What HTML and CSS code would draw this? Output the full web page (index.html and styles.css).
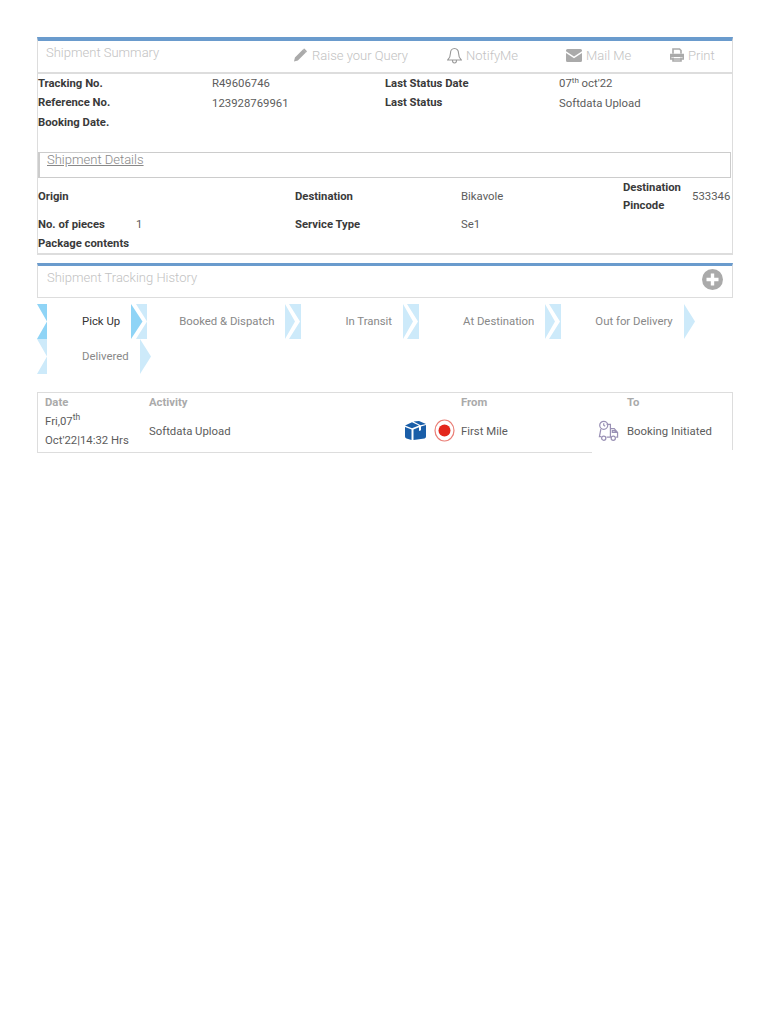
FILE: index.html
```html
<!DOCTYPE html>
<html lang="en">
<head>
<meta charset="utf-8">
<title>Shipment Tracking</title>
<link rel="stylesheet" href="styles.css">
</head>
<body>
<main class="page">
  <section class="panel summary">
    <header class="sum-head">
      <h2 class="sum-title">Shipment Summary</h2>
      <a class="act"><svg class="ico ico-pencil" viewBox="0 0 14 14"><path d="M0 14l1-4.200L9.600 1.200l3.200 3.200L4.200 13zM10.500.4l.6-.4 2.900 2.900-.4.7-.6.6-3.200-3.200z" fill="#aaa"/></svg>Raise your Query</a>
      <a class="act"><svg class="ico ico-bell" viewBox="0 0 15 17"><path d="M7.500 1.500c-2.600 0-4 2-4 4.500 0 3.500-1.300 5.500-2.800 7h13.600c-1.500-1.500-2.800-3.500-2.800-7 0-2.500-1.400-4.500-4-4.500zM5.500 13.500c0 3.300 4 3.300 4 0" fill="none" stroke="#999" stroke-width="1.100"/></svg>NotifyMe</a>
      <a class="act"><svg class="ico ico-mail" viewBox="0 0 16 13"><path d="M1.500 0h13A1.500 1.500 0 0 1 16 1.500v.8L8 7.500 0 2.300v-.8A1.500 1.500 0 0 1 1.500 0zM0 4l8 5.200L16 4v7.500a1.500 1.500 0 0 1-1.500 1.500h-13A1.500 1.500 0 0 1 0 11.500z" fill="#aaa"/></svg>Mail Me</a>
      <a class="act"><svg class="ico ico-print" viewBox="0 0 14 14"><path d="M3 5.500V1h6.500L11 2.500v3M0.800 6.500h12.400v4.500H.8zM3 9.500V13h8V9.500" fill="none" stroke="#aaa" stroke-width="1.600"/><path d="M1 6h12v3H1z" fill="#aaa"/></svg>Print</a>
    </header>
    <div class="sum-grid">
      <b>Tracking No.</b><span>R49606746</span><b>Last Status Date</b><span>07<sup class="th-small">th</sup> oct'22</span>
      <b>Reference No.</b><span>123928769961</span><b>Last Status</b><span>Softdata Upload</span>
      <b>Booking Date.</b><span></span><span></span><span></span>
    </div>
    <div class="det-head"><h3 class="det-title">Shipment Details</h3></div>
    <div class="det-grid">
      <b>Origin</b><span></span><b>Destination</b><span>Bikavole</span><b class="pin">Destination Pincode</b><span class="pin-val">533346</span>
      <b>No. of pieces</b><span>1</span><b>Service Type</b><span>Se1</span><span></span><span></span>
      <b class="wide">Package contents</b>
    </div>
  </section>

  <section class="panel track">
    <header class="track-head">
      <h2 class="sum-title track-title">Shipment Tracking History</h2>
      <svg class="plus" viewBox="0 0 21 21"><circle cx="10.500" cy="10.500" r="10.500" fill="#aaa"/><path d="M8.800 4.500h3.400v4.300h4.300v3.400h-4.300v4.300H8.800v-4.300H4.500V8.800h4.300z" fill="#fff"/></svg>
    </header>
  </section>

  <div class="steps">
    <div class="step s-first active">
      <svg class="notch" viewBox="0 0 10 35"><path d="M0 0h10v35H0l10-17.500z" fill="#8fd4f6"/></svg>
      <span class="lbl">Pick Up</span>
      <svg class="sep" viewBox="0 0 16 35"><path d="M0 0h16v35H0z" fill="#cdeafa"/><path d="M0 0h5l11 17.500L5 35H0z" fill="#fff"/><path d="M0 0l11.500 17.500L0 35z" fill="#8fd4f6"/></svg>
    </div>
    <div class="step s-b">
      <span class="lbl">Booked &amp; Dispatch</span>
      <svg class="sep" viewBox="0 0 16 35"><path d="M0 0h16v35H0z" fill="#cdeafa"/><path d="M0 0h4l11 17.500L4 35H0l10-17.500z" fill="#fff"/></svg>
    </div>
    <div class="step s-c">
      <span class="lbl">In Transit</span>
      <svg class="sep" viewBox="0 0 16 35"><path d="M0 0h16v35H0z" fill="#cdeafa"/><path d="M0 0h4l11 17.500L4 35H0l10-17.500z" fill="#fff"/></svg>
    </div>
    <div class="step s-d">
      <span class="lbl">At Destination</span>
      <svg class="sep" viewBox="0 0 16 35"><path d="M0 0h16v35H0z" fill="#cdeafa"/><path d="M0 0h4l11 17.500L4 35H0l10-17.500z" fill="#fff"/></svg>
    </div>
    <div class="step s-e">
      <span class="lbl">Out for Delivery</span>
      <svg class="tip" viewBox="0 0 11 35"><path d="M0 0l11 17.500L0 35z" fill="#cdeafa"/></svg>
    </div>
    <div class="step s-first">
      <svg class="notch" viewBox="0 0 10 35"><path d="M0 0h10v35H0l10-17.500z" fill="#cdeafa"/></svg>
      <span class="lbl">Delivered</span>
      <svg class="tip" viewBox="0 0 11 35"><path d="M0 0l11 17.500L0 35z" fill="#cdeafa"/></svg>
    </div>
  </div>

  <section class="hist">
    <div class="hist-main">
      <div class="c-date"><b class="th">Date</b><p class="when">Fri,07<sup>th</sup> Oct'22|14:32 Hrs</p></div>
      <div class="c-act"><b class="th">Activity</b><p class="val">Softdata Upload</p></div>
      <div class="c-icons">
        <svg class="box" viewBox="0 0 21 19"><path d="M0 4.500L7 1.200l7 3.300-7 2.800z M8.500 .6L14 0l7 3-5.500 1.200z" fill="#1a5ea8"/><path d="M0 6l6.500 2.600V19L1.500 17.500Q0 17 0 15.500zM8.500 8.600L14 6.300V10l2-.7V5.500L21 4v11.500q0 1.500-1.500 2L8.500 19z" fill="#1a5ea8"/></svg>
        <svg class="rec" viewBox="0 0 21 23"><ellipse cx="10.500" cy="11.500" rx="9.500" ry="10.500" fill="none" stroke="#ea7f77" stroke-width="1.200"/><circle cx="10.500" cy="11.500" r="6" fill="#e3261c"/></svg>
      </div>
      <div class="c-from"><b class="th">From</b><p class="val">First Mile</p></div>
    </div>
    <div class="hist-to">
      <svg class="truck" viewBox="0 0 22 22"><g fill="none" stroke="#9a91b5" stroke-width="1.300"><circle cx="6" cy="5" r="4.200"/><path d="M6 2.800V5l1.500 1M3 9l-1.500 8h2M9 4h4v13.500H9M13 8.500h4l3.500 4v5h-1.500M15 10.500h2.500l1.500 2h-4z"/><circle cx="6" cy="18.500" r="2.200"/><circle cx="16" cy="18.500" r="2.200"/></g></svg>
      <div class="c-to"><b class="th">To</b><p class="val">Booking Initiated</p></div>
    </div>
  </section>
</main>
</body>
</html>
```
FILE: styles.css
```css
* { box-sizing: border-box; }
html, body { margin: 0; background: #fff; }
body {
  font-family: Roboto, "Liberation Sans", sans-serif;
  font-size: 11.350px;
  color: #5c5c5c;
}
p, h2, h3 { margin: 0; font-weight: 300; }
b { color: #3a3a3a; font-weight: 700; font-size: 11.300px; }
sup { font-size: 8.500px; line-height: 0; vertical-align: 5px; }
.th-small { font-size: 8px; vertical-align: 4px; }
.page { padding: 37px 35px 0 37px; }

.panel { border-left: 1px solid #ddd; border-right: 1px solid #ddd; }
.summary { border-top: 4px solid #6a9bcd; border-bottom: 2px solid #ddd; height: 218px; }
.sum-head {
  display: grid;
  grid-template-columns: 256px 153px 119px 104px 1fr;
  align-items: center;
  height: 33px;
  border-bottom: 2px solid #ddd;
  padding-bottom: 3px;
}
.sum-title {
  font-size: 13px;
  line-height: 20px;
  color: #c2c2c2;
  padding: 0 0 5px 8px;
}
.act {
  display: flex;
  align-items: center;
  font-size: 13px;
  font-weight: 300;
  color: #c2c2c2;
}
.ico { flex: none; margin-right: 4px; }
.ico-pencil { width: 13px; height: 14px; margin-right: 5px; }
.ico-bell { width: 15px; height: 17px; }
.ico-mail { width: 16px; height: 13px; }
.ico-print { width: 14px; height: 14px; }

.sum-grid {
  display: grid;
  grid-template-columns: 174px 173px 174px 1fr;
  grid-auto-rows: 19.500px;
  align-items: center;
  height: 78px;
  margin-top: -.5px;
  margin-bottom: .5px;
}
.det-head { height: 26px; border: 1px solid #ccc; border-left-width: 2px; margin-right: 1px; }
.det-title {
  font-size: 13px;
  line-height: 13px;
  color: #888;
  text-decoration: underline;
  padding-left: 7px;
}
.det-grid {
  display: grid;
  grid-template-columns: 98px 159px 166px 162px 69px 1fr;
  grid-template-rows: 36px 20px 19px;
  align-items: center;
}
.wide { grid-column: 1 / -1; }
.pin { line-height: 18px; padding-top: 1px; }
.pin-val { white-space: nowrap; }

.track { margin-top: 8px; border-top: 3px solid #6a9bcd; border-bottom: 1px solid #ddd; }
.track-head {
  display: flex;
  align-items: flex-start;
  justify-content: space-between;
  height: 31px;
  padding: 3px 9px 0 0;
}
.track-title { padding: 0 0 0 9px; margin-top: -1px; }
.plus { width: 21px; height: 21px; flex: none; }

.steps { display: flex; flex-wrap: wrap; margin-top: 6px; align-content: flex-start; }
.step { display: flex; align-items: center; height: 35px; color: #888; }
.step.active { color: #333; }
.lbl { line-height: 33px; padding-bottom: 1px; }
.notch { width: 10px; height: 35px; flex: none; margin-right: 35px; }
.sep { width: 16px; height: 35px; flex: none; margin-left: 11px; }
.tip { width: 11px; height: 35px; flex: none; margin-left: 11px; }
.s-b { padding-left: 32px; }
.s-c { padding-left: 44px; }
.s-d { padding-left: 44px; }
.s-e { padding-left: 34px; }

.hist { display: flex; align-items: flex-start; margin-top: 18px; }
.th { display: block; color: #aaa; line-height: 20px; }
.hist-main {
  display: grid;
  grid-template-columns: 104px 256px 56px 1fr;
  width: 555px;
  height: 61px;
  border: 1px solid #ddd;
  border-right: 0;
  padding-left: 7px;
}
.when { line-height: 19px; margin-top: -1px; font-weight: 400; }
.val { line-height: 20px; margin-top: 8px; font-weight: 400; }
.c-date { width: 100px; }
.c-icons {
  display: flex;
  align-items: center;
  gap: 8px;
  padding-top: 16px;
  height: 59px;
}
.box { width: 21px; height: 19px; flex: none; }
.rec { width: 21px; height: 23px; flex: none; }
.hist-to {
  display: flex;
  flex: 1;
  height: 58px;
  border-top: 1px solid #ddd;
  border-right: 1px solid #ddd;
  padding-left: 6px;
  gap: 8px;
}
.truck { width: 21px; height: 22px; flex: none; margin-top: 27px; }
```
